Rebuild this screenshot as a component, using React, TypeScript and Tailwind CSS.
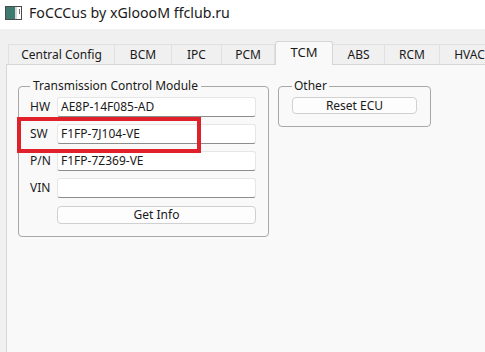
import React from "react";

const font = { fontFamily: '"Noto Sans", "Open Sans", sans-serif' };

function Tab({ label, w, active }: { label: string; w: number; active?: boolean }) {
  if (active) {
    return (
      <div
        className="relative z-10 -mb-px flex h-[24px] items-center justify-center rounded-t-[3px] border border-b-0 border-[#d6d6d6] bg-[#f9f9f9] text-[13px] text-[#1a1a1a]"
        style={{ width: w }}
      >
        <span className="-mt-[2px]">{label}</span>
      </div>
    );
  }
  return (
    <div
      className="flex h-[20px] items-center justify-center border-r border-t border-[#e0e0e0] bg-[#f0f0f0] text-[12px] text-[#1a1a1a]"
      style={{ width: w }}
    >
      {label}
    </div>
  );
}

function Field({ label, value }: { label: string; value: string }) {
  return (
    <div className="flex h-[20px] items-center">
      <div className="w-[27px] text-[12px] text-[#1a1a1a]">{label}</div>
      <div className="flex h-[20px] w-[199px] items-center rounded-[3px] border border-[#e6e6e6] border-b-[#8c8c8c] bg-white pl-[3px] text-[12px] text-[#1a1a1a]">
        {value}
      </div>
    </div>
  );
}

export default function App() {
  return (
    <div className="h-[352px] w-[485px] overflow-hidden bg-[#f0f0f0]" style={font}>
      {/* Title bar */}
      <div className="flex h-[29px] items-center bg-white pb-[4px]">
        <div className="ml-[5px] flex h-[14px] w-[17px] border border-[#4a4a4a] bg-white">
          <div className="h-full w-[9px] bg-[#3f7a70]" />
          <div className="h-full w-[2px] bg-[#d8d8d8]" />
          <div className="ml-[2px] mt-[2px] h-[5px] w-[1px] bg-[#777]" />
        </div>
        <div className="ml-[7px] text-[14.2px] text-[#1a1a1a]">FoCCCus by xGloooM ffclub.ru</div>
      </div>

      {/* Tab strip */}
      <div className="flex h-[35px] items-end pl-[8px]">
        <div className="flex items-end">
          <div className="flex h-[20px] w-[107px] items-center justify-center border-l border-r border-t border-[#e0e0e0] bg-[#f0f0f0] text-[12px] text-[#1a1a1a]">
            Central Config
          </div>
          <Tab label="BCM" w={57} />
          <Tab label="IPC" w={50} />
          <Tab label="PCM" w={53} />
          <Tab label="TCM" w={58} active />
          <Tab label="ABS" w={52} />
          <Tab label="RCM" w={55} />
          <Tab label="HVAC" w={60} />
        </div>
      </div>

      {/* Pane */}
      <div className="ml-[6px] h-[300px] border-l border-t border-[#d6d6d6] bg-[#f9f9f9] pl-[11px] pt-[13px]">
        <div className="flex items-start gap-[9px]">
          {/* Transmission group */}
          <fieldset className="relative w-[251px] rounded-[4px] border border-[#a8a8a8] px-[11px] pb-[12px] pt-[3px]">
            <legend className="px-[3px] text-[12px] leading-[16px] text-[#1a1a1a]">
              Transmission Control Module
            </legend>
            <div className="flex flex-col gap-[7px]">
              <Field label="HW" value="AE8P-14F085-AD" />
              <Field label="SW" value="F1FP-7J104-VE" />
              <Field label="P/N" value="F1FP-7Z369-VE" />
              <Field label="VIN" value="" />
              <div className="ml-[27px] mt-[1px] flex h-[18px] w-[199px] items-center justify-center rounded-[4px] border border-[#d0d0d0] bg-[#fdfdfd] text-[12px] text-[#1a1a1a]">
                Get Info
              </div>
            </div>
            {/* red annotation */}
            <div className="absolute left-[-2px] top-[23px] h-[36px] w-[184px] border-[4px] border-[#e0202a]" />
          </fieldset>

          {/* Other group */}
          <fieldset className="w-[152px] rounded-[4px] border border-[#a8a8a8] px-[13px] pb-[12px] pt-[3px]">
            <legend className="px-[2px] text-[12px] leading-[16px] text-[#1a1a1a]">Other</legend>
            <div className="flex h-[17px] w-[125px] items-center justify-center rounded-[4px] border border-[#d0d0d0] bg-[#fdfdfd] text-[12px] text-[#1a1a1a]">
              Reset ECU
            </div>
          </fieldset>
        </div>
      </div>
    </div>
  );
}
